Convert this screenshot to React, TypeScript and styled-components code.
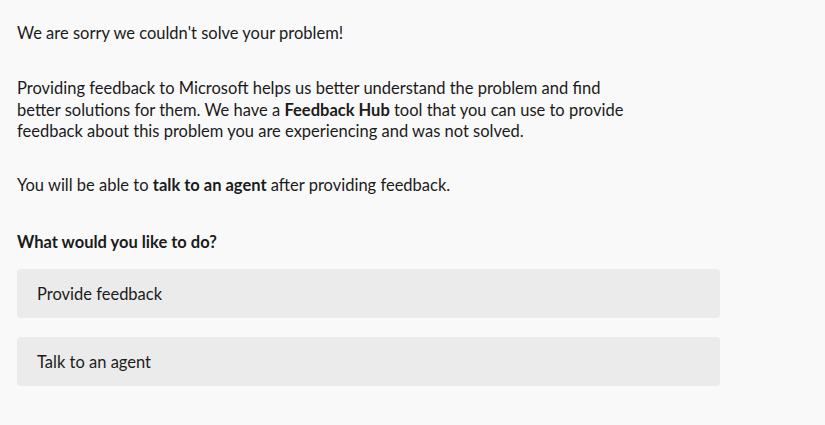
import React from 'react'
import styled, { createGlobalStyle } from 'styled-components'

// ____________________________________________________________________________
//
const GlobalStyle = createGlobalStyle`
  html, body {
    margin: 0;
    padding: 0;
    background: #f9f9f9;
  }
  body {
    font-family: 'Segoe UI', Lato, 'Noto Sans', sans-serif;
    color: #1b1b1b;
    -webkit-font-smoothing: antialiased;
  }
`

type ActionButton = {
  label: string
}
// ____________________________________________________________________________
//
const App: React.FC = () => {
  return (
    <>
      <GlobalStyle />
      <Page>
        <Title>We are sorry we couldn't solve your problem!</Title>
        <Paragraph>
          Providing feedback to Microsoft helps us better understand the problem and find
          <br />
          better solutions for them. We have a <b>Feedback Hub</b> tool that you can use to provide
          <br />
          feedback about this problem you are experiencing and was not solved.
        </Paragraph>
        <Paragraph $last>
          You will be able to <b>talk to an agent</b> after providing feedback.
        </Paragraph>
        <Question>What would you like to do?</Question>
        <Actions>
          <ActionButton label="Provide feedback" />
          <ActionButton label="Talk to an agent" />
        </Actions>
      </Page>
    </>
  )
}

const ActionButton: React.FC<ActionButton> = ({ label }) => {
  return <StyledButton type="button">{label}</StyledButton>
}

export default App
// ____________________________________________________________________________
//
const Page = styled.main`
  display: flex;
  flex-direction: column;
  padding: 22px 0 0 17px;
  width: 703px;
  font-size: 16.5px;
`

const Title = styled.p`
  margin: 0 0 34px;
  line-height: 22px;
`

const Paragraph = styled.p<{ $last?: boolean }>`
  margin: 0 0 ${(props) => (props.$last ? '35px' : '32px')};
  line-height: 21.5px;
  b {
    font-weight: 700;
  }
`

const Question = styled.h3`
  margin: 0 0 16px;
  font-size: inherit;
  line-height: 22px;
  font-weight: 700;
`

const Actions = styled.div`
  display: flex;
  flex-direction: column;
  gap: 19px;
`

const StyledButton = styled.button`
  display: flex;
  align-items: center;
  height: 49px;
  padding: 0 20px;
  border: none;
  border-radius: 4px;
  background: #ebebeb;
  color: #1b1b1b;
  font-family: inherit;
  font-size: inherit;
  text-align: left;
  cursor: pointer;
`
